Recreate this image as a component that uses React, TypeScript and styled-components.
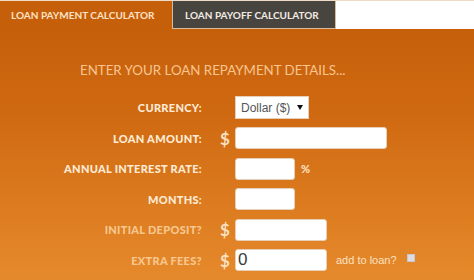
import React from "react";
import styled, { createGlobalStyle } from "styled-components";

const Global = createGlobalStyle`
  html, body { margin: 0; padding: 0; background: #fff; }
  body { width: 474px; height: 280px; overflow: hidden; }
  * { box-sizing: border-box; }
`;

const Page = styled.div`
  width: 474px;
  height: 280px;
  display: flex;
  flex-direction: column;
  background: #fff;
`;

const TabBar = styled.div`
  display: flex;
  height: 29px;
  border-top: 1px solid #efdcc8;
  background: #fff;
`;

const Tab = styled.div<{ $active?: boolean; $w: number }>`
  width: ${(p) => p.$w}px;
  height: 100%;
  display: flex;
  align-items: center;
  padding-left: ${(p) => (p.$active ? 11 : 12)}px;
  font-family: Lato, "Open Sans", sans-serif;
  font-weight: 700;
  font-size: 10px;
  letter-spacing: 0px;
  background: ${(p) => (p.$active ? "#c65f0a" : "#48443f")};
  color: ${(p) => (p.$active ? "#fbe2c4" : "#f2ebe3")};
  border: ${(p) => (p.$active ? "none" : "1px solid #d9bb9c")};
  border-top: none;
`;

const Panel = styled.div`
  flex: 1;
  background: linear-gradient(to bottom, #c65f0a 0%, #d06a12 35%, #dc7b1f 70%, #e58a2c 100%);
  padding-top: 33px;
`;

const Heading = styled.div`
  margin-left: 80px;
  height: 16px;
  line-height: 16px;
  font-family: Lato, "Open Sans", sans-serif;
  font-weight: 400;
  font-size: 13.3px;
  color: #f8c590;
`;

const Form = styled.div`
  margin-top: 14.5px;
  display: grid;
  grid-template-columns: 202px 33px 1fr;
  grid-auto-rows: 30.5px;
  align-items: center;
`;

const Label = styled.div<{ $faded?: boolean }>`
  text-align: right;
  font-family: Lato, "Open Sans", sans-serif;
  font-weight: 900;
  font-size: 11px;
  letter-spacing: 0.3px;
  color: ${(p) => (p.$faded ? "#f7c790" : "#fdebd6")};
`;

const Sym = styled.div`
  padding-left: 18px;
  font-family: Lato, "Open Sans", sans-serif;
  font-weight: 700;
  font-size: 17px;
  color: #fbe1c3;
  line-height: 1;
`;

const Field = styled.div`
  display: flex;
  align-items: center;
  gap: 6px;
`;

const Input = styled.input<{ $w: number }>`
  width: ${(p) => p.$w}px;
  height: 22px;
  border: 1px solid #e6cfb6;
  border-radius: 3px;
  background: #fff;
  padding: 0 2px;
  font-family: "Liberation Sans", Arial, sans-serif;
  font-size: 17px;
  color: #3a3a3a;
  outline: none;
`;

const SelectWrap = styled.div`
  position: relative;
  width: 74px;
  height: 23px;
`;

const Select = styled.select`
  appearance: none;
  -webkit-appearance: none;
  width: 100%;
  height: 100%;
  border: 1px solid #e6cfb6;
  border-radius: 0;
  background: #fff;
  padding: 0 0 0 5px;
  font-family: "Liberation Sans", Arial, sans-serif;
  font-size: 12px;
  color: #555;
  outline: none;
`;

const Arrow = styled.span`
  position: absolute;
  right: 6px;
  top: 9px;
  width: 0;
  height: 0;
  border-left: 3px solid transparent;
  border-right: 3px solid transparent;
  border-top: 5px solid #111;
  pointer-events: none;
`;

const Unit = styled.span`
  font-family: Lato, "Open Sans", sans-serif;
  font-weight: 900;
  font-size: 11px;
  color: #fbe1c3;
`;

const Note = styled.span`
  margin-left: 3px;
  font-family: "Liberation Sans", Arial, sans-serif;
  font-size: 11px;
  color: #fbe1c3;
`;

const Check = styled.span`
  width: 8px;
  height: 8px;
  margin-left: 4px;
  margin-top: -4px;
  background: #dcdce4;
  border: 1px solid #c8c8d2;
`;

export default function App() {
  return (
    <Page>
      <Global />
      <TabBar>
        <Tab $active $w={172}>LOAN PAYMENT CALCULATOR</Tab>
        <Tab $w={164}>LOAN PAYOFF CALCULATOR</Tab>
      </TabBar>
      <Panel>
        <Heading>ENTER YOUR LOAN REPAYMENT DETAILS...</Heading>
        <Form>
          <Label>CURRENCY:</Label>
          <Sym />
          <Field>
            <SelectWrap>
              <Select defaultValue="usd">
                <option value="usd">Dollar ($)</option>
              </Select>
              <Arrow />
            </SelectWrap>
          </Field>

          <Label>LOAN AMOUNT:</Label>
          <Sym>$</Sym>
          <Field>
            <Input $w={152} />
          </Field>

          <Label>ANNUAL INTEREST RATE:</Label>
          <Sym />
          <Field>
            <Input $w={60} />
            <Unit>%</Unit>
          </Field>

          <Label>MONTHS:</Label>
          <Sym />
          <Field>
            <Input $w={60} />
          </Field>

          <Label $faded>INITIAL DEPOSIT?</Label>
          <Sym>$</Sym>
          <Field>
            <Input $w={92} />
          </Field>

          <Label $faded>EXTRA FEES?</Label>
          <Sym>$</Sym>
          <Field>
            <Input $w={92} defaultValue="0" />
            <Note>add to loan?</Note>
            <Check />
          </Field>
        </Form>
      </Panel>
    </Page>
  );
}
